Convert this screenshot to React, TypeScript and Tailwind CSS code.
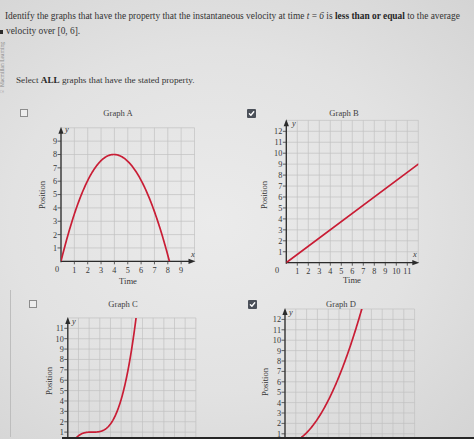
import React from 'react';

type Pt = [number, number];

interface ChartSpec {
  id: string;
  checked: boolean;
  boxClass: string;
  titleClass: string;
  view: [number, number, number, number];
  ox: number;
  oy: number;
  cx: number;
  cy: number;
  nx: number;
  ny: number;
  yLabels: number;
  xLabels: number;
  posLabel: Pt;
  yName: Pt;
  xName?: Pt;
  timeLabel?: Pt;
  zeroLabel?: Pt;
  curve: Pt[];
}

const SERIF = '"Liberation Serif", "Times New Roman", serif';

const sample = (f: (x: number) => number, a: number, b: number): Pt[] => {
  const out: Pt[] = [];
  for (let x = a; x <= b + 1e-9; x += 0.04) out.push([x, f(x)]);
  out.push([b, f(b)]);
  return out;
};

// graph A: slightly lopsided hill, peak 8 near t = 3.95
const hill = (x: number) => {
  const peak = 3.95;
  const k = x < peak ? 8 / (peak * peak) : 8 / Math.pow(8.12 - peak, 2);
  return 8 - k * Math.pow(x - peak, 2);
};

const charts: ChartSpec[] = [
  {
    id: 'A',
    checked: false,
    boxClass: 'ml-[20px]',
    titleClass: 'ml-[60px]',
    view: [0, 119, 237, 171],
    ox: 61,
    oy: 261.3,
    cx: 13.35,
    cy: 13.35,
    nx: 10,
    ny: 10,
    yLabels: 9,
    xLabels: 9,
    posLabel: [42, 195],
    yName: [65, 132],
    xName: [191, 257],
    timeLabel: [128, 284],
    zeroLabel: [57, 272],
    curve: sample(hill, 0, 8.12),
  },
  {
    id: 'B',
    checked: true,
    boxClass: 'ml-[10px]',
    titleClass: 'ml-[58px]',
    view: [237, 119, 237, 171],
    ox: 286.3,
    oy: 262.7,
    cx: 11,
    cy: 10.95,
    nx: 12,
    ny: 13,
    yLabels: 12,
    xLabels: 11,
    posLabel: [264, 195],
    yName: [292, 126],
    xName: [413, 257],
    timeLabel: [352, 283],
    zeroLabel: [277, 273],
    curve: [[0, 0], [12, 9]],
  },
  {
    id: 'C',
    checked: false,
    boxClass: 'ml-[18px]',
    titleClass: 'ml-[56px]',
    view: [11, 310, 226, 127],
    ox: 67.8,
    oy: 442.5,
    cx: 10.67,
    cy: 10.38,
    nx: 12,
    ny: 12,
    yLabels: 11,
    xLabels: 0,
    posLabel: [48.5, 381],
    yName: [72, 324],
    curve: sample((x) => 0.16 * Math.pow(x - 2.3, 3) + 1, 0.3, 6.6),
  },
  {
    id: 'D',
    checked: true,
    boxClass: 'ml-[10px]',
    titleClass: 'ml-[54px]',
    view: [237, 310, 237, 127],
    ox: 284,
    oy: 444.2,
    cx: 10.8,
    cy: 10.4,
    nx: 12,
    ny: 13,
    yLabels: 12,
    xLabels: 0,
    posLabel: [264, 382],
    yName: [288, 315],
    curve: sample((x) => Math.pow((x + 0.1) / 2.0, 2), 0.8, 7.6),
  },
];

function buildPath(pts: Pt[]) {
  return pts.map((p, i) => `${i ? 'L' : 'M'}${p[0].toFixed(2)},${p[1].toFixed(2)}`).join(' ');
}

function Checkbox({ checked, className }: { checked: boolean; className: string }) {
  if (checked) {
    return (
      <span className={`${className} flex h-[9px] w-[9px] shrink-0 items-center justify-center rounded-[1px] bg-[#4b5059]`}>
        <svg width="7" height="7" viewBox="0 0 10 10">
          <path d="M2 5.4 L4.1 7.4 L8.2 2.6" fill="none" stroke="#ffffff" strokeWidth="2" strokeLinecap="round" strokeLinejoin="round" />
        </svg>
      </span>
    );
  }
  return <span className={`${className} block h-[8px] w-[8px] shrink-0 border border-[#8c8c8c] bg-[#ededed]`} />;
}

function Plot({ c }: { c: ChartSpec }) {
  const [vx, vy, vw, vh] = c.view;
  const right = c.ox + c.nx * c.cx;
  const top = c.oy - c.ny * c.cy;
  const px = (x: number) => c.ox + x * c.cx;
  const py = (y: number) => c.oy - y * c.cy;
  const curvePts: Pt[] = c.curve.map(([x, y]) => [px(x), py(y)]);

  return (
    <svg width={vw} height={vh} viewBox={`${vx} ${vy} ${vw} ${vh}`} className="block overflow-visible">
      <defs>
        <clipPath id={`clip-${c.id}`}>
          <rect x={c.ox} y={top} width={right - c.ox} height={c.oy - top} />
        </clipPath>
      </defs>
      {/* grid */}
      {Array.from({ length: c.nx + 1 }, (_, i) => (
        <line key={`v${i}`} x1={px(i)} y1={top} x2={px(i)} y2={c.oy} stroke="#c1c1c1" strokeWidth="0.7" />
      ))}
      {Array.from({ length: c.ny + 1 }, (_, i) => (
        <line key={`h${i}`} x1={c.ox} y1={py(i)} x2={right} y2={py(i)} stroke="#c1c1c1" strokeWidth="0.7" />
      ))}

      {/* axes */}
      <line x1={c.ox} y1={c.oy + 1} x2={c.ox} y2={top + 4} stroke="#2b2b2b" strokeWidth="1.3" />
      <polygon points={`${c.ox},${top - 1} ${c.ox - 2.6},${top + 6} ${c.ox + 2.6},${top + 6}`} fill="#2b2b2b" />
      <line x1={c.ox} y1={c.oy} x2={right - 3} y2={c.oy} stroke="#2b2b2b" strokeWidth="1.3" />
      <polygon points={`${right + 1},${c.oy} ${right - 6},${c.oy - 2.6} ${right - 6},${c.oy + 2.6}`} fill="#2b2b2b" />

      {/* ticks + labels */}
      <g fontFamily={SERIF} fontSize="8.2" fill="#363636">
        {Array.from({ length: c.yLabels }, (_, i) => (
          <g key={`yl${i}`}>
            <line x1={c.ox - 3.5} y1={py(i + 1)} x2={c.ox} y2={py(i + 1)} stroke="#3a3a3a" strokeWidth="0.8" />
            <text x={c.ox - 4} y={py(i + 1) + 2.9} textAnchor="end">{i + 1}</text>
          </g>
        ))}
        {Array.from({ length: c.xLabels }, (_, i) => (
          <g key={`xl${i}`}>
            <line x1={px(i + 1)} y1={c.oy} x2={px(i + 1)} y2={c.oy + 3} stroke="#3a3a3a" strokeWidth="0.8" />
            <text x={px(i + 1)} y={c.oy + 11.5} textAnchor="middle">{i + 1}</text>
          </g>
        ))}
        {c.zeroLabel && (
          <text x={c.zeroLabel[0]} y={c.zeroLabel[1]} textAnchor="middle">0</text>
        )}
        {c.timeLabel && (
          <text x={c.timeLabel[0]} y={c.timeLabel[1]} textAnchor="middle" fontSize="8.6">Time</text>
        )}
        <text
          x={c.posLabel[0]}
          y={c.posLabel[1]}
          textAnchor="middle"
          dominantBaseline="central"
          fontSize="8.6"
          transform={`rotate(-90 ${c.posLabel[0]} ${c.posLabel[1]})`}
        >
          Position
        </text>
        <text x={c.yName[0]} y={c.yName[1]} fontStyle="italic" fontSize="8.4">y</text>
        {c.xName && (
          <text x={c.xName[0]} y={c.xName[1]} fontStyle="italic" fontSize="8.4">x</text>
        )}
      </g>

      {/* curve */}
      <path
        d={buildPath(curvePts)}
        fill="none"
        stroke="#c91d35"
        strokeWidth="1.7"
        strokeLinecap="round"
        strokeLinejoin="round"
        clipPath={`url(#clip-${c.id})`}
      />
    </svg>
  );
}

function Card({ c }: { c: ChartSpec }) {
  return (
    <div className="flex flex-col">
      <div className="flex h-[12px] items-center">
        <Checkbox checked={c.checked} className={c.boxClass} />
        <span className={`${c.titleClass} w-[60px] text-center text-[8.6px] leading-none text-[#3f3f3f]`}>
          Graph {c.id}
        </span>
      </div>
      <Plot c={c} />
    </div>
  );
}

export default function App() {
  return (
    <div
      className="relative flex h-[439px] w-[474px] flex-col overflow-hidden bg-[radial-gradient(ellipse_at_45%_50%,#ebebeb_0%,#e2e2e2_55%,#d4d4d4_100%)] text-[#343434]"
      style={{ fontFamily: SERIF }}
    >
      {/* copyright strip on the left edge */}
      <span className="absolute left-[0px] top-[42px] text-[5.5px] leading-none text-[#8a8a8a] [writing-mode:vertical-rl] rotate-180">
        © Macmillan Learning
      </span>

      {/* Question */}
      <div className="pl-[5px] pt-[9px] text-[9.4px] leading-[15px]">
        <div className="whitespace-nowrap">
          Identify the graphs that have the property that the instantaneous velocity at time <i>t</i> = <i>6</i> is{' '}
          <b className="text-[#262626]">less than or equal</b> to the average
        </div>
        <div className="-ml-[5px] flex items-center whitespace-nowrap">
          <span className="mr-[3px] inline-block h-[4px] w-[3px] bg-[#2a2a2a]" />
          velocity over [0, 6].
        </div>
      </div>

      <div className="mt-[35px] pl-[16px] text-[9.2px] leading-[12px]">
        Select <b className="text-[#262626]">ALL</b> graphs that have the stated property.
      </div>

      {/* Row 1 */}
      <div className="mt-[21px] grid h-[183px] grid-cols-[237px_237px]">
        <Card c={charts[0]} />
        <Card c={charts[1]} />
      </div>

      {/* Row 2 */}
      <div className="ml-[10px] grid h-[147px] grid-cols-[227px_237px] overflow-hidden border-l border-[#bdbdbd] pt-[8px]">
        <Card c={charts[2]} />
        <Card c={charts[3]} />
      </div>

      <div className="ml-[62px] h-[2px] bg-[#262626]" />
    </div>
  );
}
